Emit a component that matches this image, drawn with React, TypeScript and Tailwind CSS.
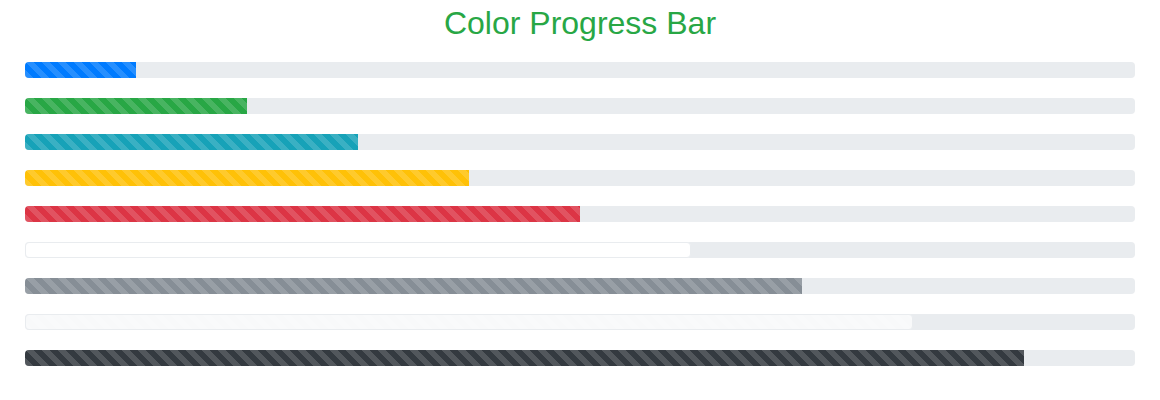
const stripes =
  'bg-[linear-gradient(45deg,rgba(255,255,255,.15)_25%,transparent_25%,transparent_50%,rgba(255,255,255,.15)_50%,rgba(255,255,255,.15)_75%,transparent_75%,transparent)] bg-[length:16px_16px]';

const bars = [
  { pct: 10, color: 'bg-[#007bff]' },
  { pct: 20, color: 'bg-[#28a745]' },
  { pct: 30, color: 'bg-[#17a2b8]' },
  { pct: 40, color: 'bg-[#ffc107]' },
  { pct: 50, color: 'bg-[#dc3545]' },
  { pct: 60, color: 'bg-white border border-[#e9ecef] rounded' },
  { pct: 70, color: 'bg-[#868e96]' },
  { pct: 80, color: 'bg-[#f8f9fa] border border-[#e9ecef] rounded' },
  { pct: 90, color: 'bg-[#343a40]' },
];

export default function App() {
  return (
    <div className="min-h-[400px] bg-white font-['Liberation_Sans',Arial,sans-serif]">
      <div className="mx-auto w-[1110px] pt-[4px]">
        <h2 className="text-center text-[32px] leading-[38px] text-[#28a745] mb-[20px]">
          Color Progress Bar
        </h2>
        <div className="flex flex-col gap-[20px]">
          {bars.map((b) => (
            <div key={b.pct} className="flex h-4 overflow-hidden rounded bg-[#e9ecef]">
              <div className={`h-full ${b.color} ${stripes}`} style={{ width: `${b.pct}%` }} />
            </div>
          ))}
        </div>
      </div>
    </div>
  );
}
